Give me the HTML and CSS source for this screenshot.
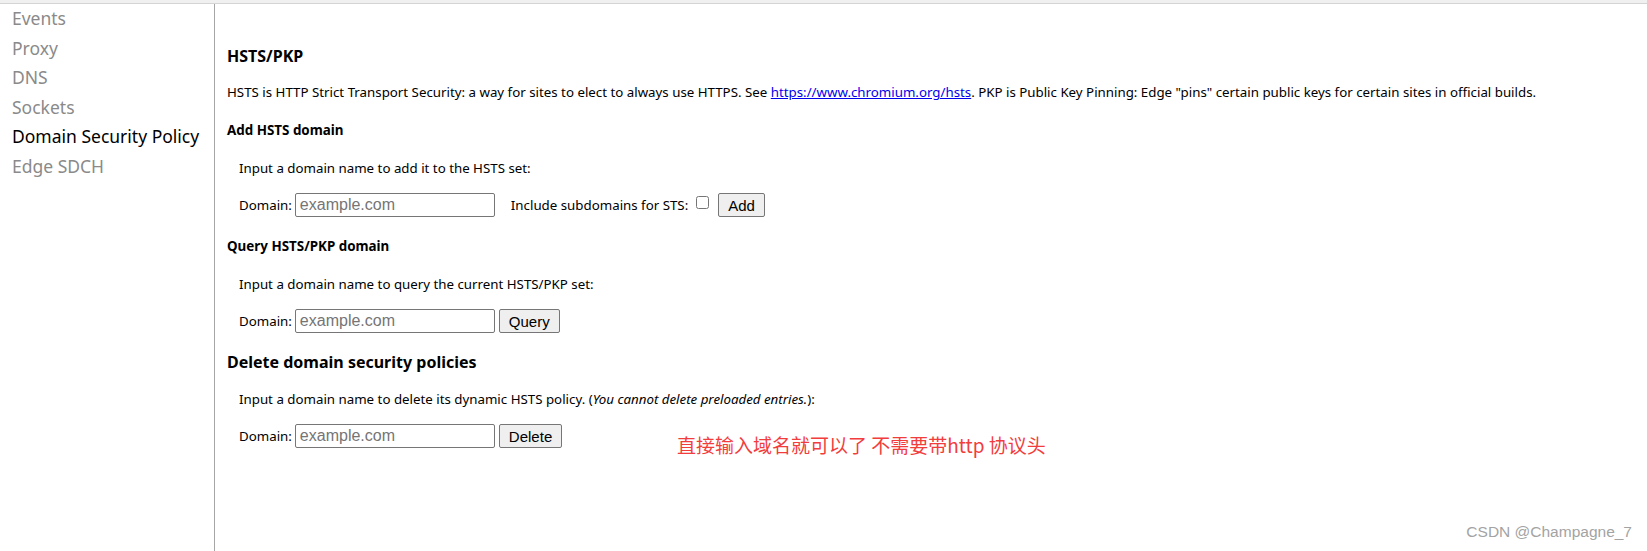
FILE: index.html
```html
<!DOCTYPE html>
<html lang="en">
<head>
<meta charset="utf-8">
<title>net-internals</title>
<link rel="stylesheet" href="styles.css">
</head>
<body>
<div class="topbar"></div>
<div class="layout">
  <nav class="sidebar">
    <div class="nav-item">Events</div>
    <div class="nav-item">Proxy</div>
    <div class="nav-item">DNS</div>
    <div class="nav-item">Sockets</div>
    <div class="nav-item selected">Domain Security Policy</div>
    <div class="nav-item">Edge SDCH</div>
  </nav>
  <main class="content">
    <h3 class="title">HSTS/PKP</h3>
    <p class="intro">HSTS is HTTP Strict Transport Security: a way for sites to elect to always use HTTPS. See <a href="#">https://www.chromium.org/hsts</a>. PKP is Public Key Pinning: Edge "pins" certain public keys for certain sites in official builds.</p>

    <h4 class="sub">Add HSTS domain</h4>
    <p class="hint">Input a domain name to add it to the HSTS set:</p>
    <div class="row">
      <span class="label">Domain:</span>
      <input class="domain" type="text" placeholder="example.com">
      <span class="label include">Include subdomains for STS:</span>
      <input class="check" type="checkbox">
      <button class="btn add">Add</button>
    </div>

    <h4 class="sub">Query HSTS/PKP domain</h4>
    <p class="hint">Input a domain name to query the current HSTS/PKP set:</p>
    <div class="row">
      <span class="label">Domain:</span>
      <input class="domain" type="text" placeholder="example.com">
      <button class="btn">Query</button>
    </div>

    <h3 class="title del">Delete domain security policies</h3>
    <p class="hint">Input a domain name to delete its dynamic HSTS policy. (<i>You cannot delete preloaded entries.</i>):</p>
    <div class="row">
      <span class="label">Domain:</span>
      <input class="domain" type="text" placeholder="example.com">
      <button class="btn">Delete</button>
    </div>

    <div class="note">直接输入域名就可以了 不需要带http 协议头</div>
  </main>
</div>
<div class="watermark">CSDN @Champagne_7</div>
</body>
</html>
```

FILE: styles.css
```css
html, body {
  margin: 0;
  padding: 0;
  background: #ffffff;
  height: 100%;
}

body {
  font-family: "Noto Sans", "Open Sans", sans-serif;
  color: #000;
  overflow: hidden;
  position: relative;
}

.topbar {
  height: 3px;
  background: #f0f0f0;
  border-bottom: 1px solid #d4d4d4;
}

.layout {
  display: flex;
  height: 547px;
}

.sidebar {
  width: 214px;
  flex: none;
  border-right: 1px solid #a6a6a6;
}

.nav-item {
  font-size: 17.5px;
  line-height: 29.6px;
  padding-left: 12px;
  color: #8a8a8a;
  white-space: nowrap;
}

.nav-item.selected {
  color: #000;
}

.content {
  flex: 1;
  padding-left: 12px;
  padding-top: 42px;
  position: relative;
  font-size: 13.3px;
}

.title {
  margin: 0 0 16px 0;
  font-size: 16px;
  line-height: 20px;
  font-weight: bold;
}

.title.del {
  margin-top: 17px;
  margin-bottom: 17px;
}

.intro {
  margin: 0 0 18px 0;
  line-height: 20px;
  white-space: nowrap;
}

.intro a {
  color: #0000ee;
}

.sub {
  margin: 0 0 18px 0;
  font-size: 13.4px;
  line-height: 20px;
  font-weight: bold;
}

.hint {
  margin: 0 0 14px 12px;
  line-height: 20px;
}

.row {
  display: flex;
  align-items: center;
  height: 26px;
  margin: 0 0 18px 12px;
}

.label {
  margin-right: 3px;
}

.label.include {
  margin-left: 16px;
  margin-right: 0;
}

.domain {
  box-sizing: border-box;
  width: 200px;
  height: 24px;
  border: 1px solid #767676;
  border-radius: 2px;
  padding: 1px 4px;
  font-family: "Liberation Sans", Arial, sans-serif;
  font-size: 16px;
  color: #000;
  outline: none;
}

.domain::placeholder {
  color: #757575;
}

.check {
  width: 13px;
  height: 13px;
  margin: 0 9px 6px 8px;
}

.btn {
  margin-left: 4px;
  height: 24px;
  padding: 0 9px;
  font-family: "Liberation Sans", Arial, sans-serif;
  font-size: 15px;
  color: #000;
  background: #efefef;
  border: 1px solid #767676;
  border-radius: 2px;
}

.btn.add {
  margin-left: 0;
}

.note {
  position: absolute;
  left: 462px;
  top: 429px;
  font-family: "Noto Sans CJK SC", "Noto Sans", sans-serif;
  font-size: 19px;
  line-height: 24px;
  color: #f23d3d;
  white-space: nowrap;
}

.watermark {
  position: absolute;
  right: 15px;
  bottom: 10px;
  font-family: "Liberation Sans", Arial, sans-serif;
  font-size: 15.5px;
  color: #a3a3a3;
}
```
